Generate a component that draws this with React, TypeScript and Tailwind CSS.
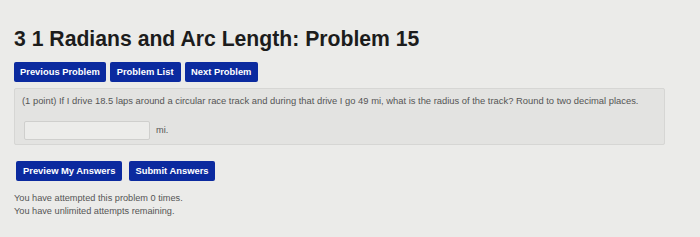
export default function App() {
  return (
    <div className="min-h-[237px] w-[700px] bg-[#ebebe9] px-[14px] pt-[26px] font-['Liberation_Sans',Arial,sans-serif] text-[#555]">
      <h1 className="text-[21.2px] font-bold leading-[26px] text-[#1c1c1c]">
        3 1 Radians and Arc Length: Problem 15
      </h1>
      <div className="mt-[10px] flex gap-[4px]">
        <button className="h-[20px] rounded-[2px] bg-[#0b2a9f] px-[6px] text-[9.4px] font-bold text-white">
          Previous Problem
        </button>
        <button className="h-[20px] rounded-[2px] bg-[#0b2a9f] px-[7px] text-[9.4px] font-bold text-white">
          Problem List
        </button>
        <button className="h-[20px] rounded-[2px] bg-[#0b2a9f] px-[6.5px] text-[9.4px] font-bold text-white">
          Next Problem
        </button>
      </div>
      <div className="mt-[6px] w-[651px] rounded-[2px] border border-[#d6d6d4] bg-[#e3e3e1] px-[7px] pt-[6px] pb-[4px]">
        <p className="text-[9.4px] leading-[12px]">
          (1 point) If I drive 18.5 laps around a circular race track and during that drive I go 49 mi, what is the radius of the track? Round to two decimal places.
        </p>
        <div className="mt-[14px] flex items-center gap-[6px] pl-[2px]">
          <input className="h-[19px] w-[126px] rounded-[2px] border border-[#cfcfcd] bg-[#ececea]" />
          <span className="text-[9.2px]">mi.</span>
        </div>
      </div>
      <div className="mt-[16px] flex gap-[7px] pl-[2px]">
        <button className="h-[20px] rounded-[2px] bg-[#0b2a9f] px-[7px] text-[9.4px] font-bold text-white">
          Preview My Answers
        </button>
        <button className="h-[20px] rounded-[2px] bg-[#0b2a9f] px-[6px] text-[9.4px] font-bold text-white">
          Submit Answers
        </button>
      </div>
      <div className="mt-[11px] text-[9.2px] leading-[13px]">
        <p>You have attempted this problem 0 times.</p>
        <p>You have unlimited attempts remaining.</p>
      </div>
    </div>
  );
}
